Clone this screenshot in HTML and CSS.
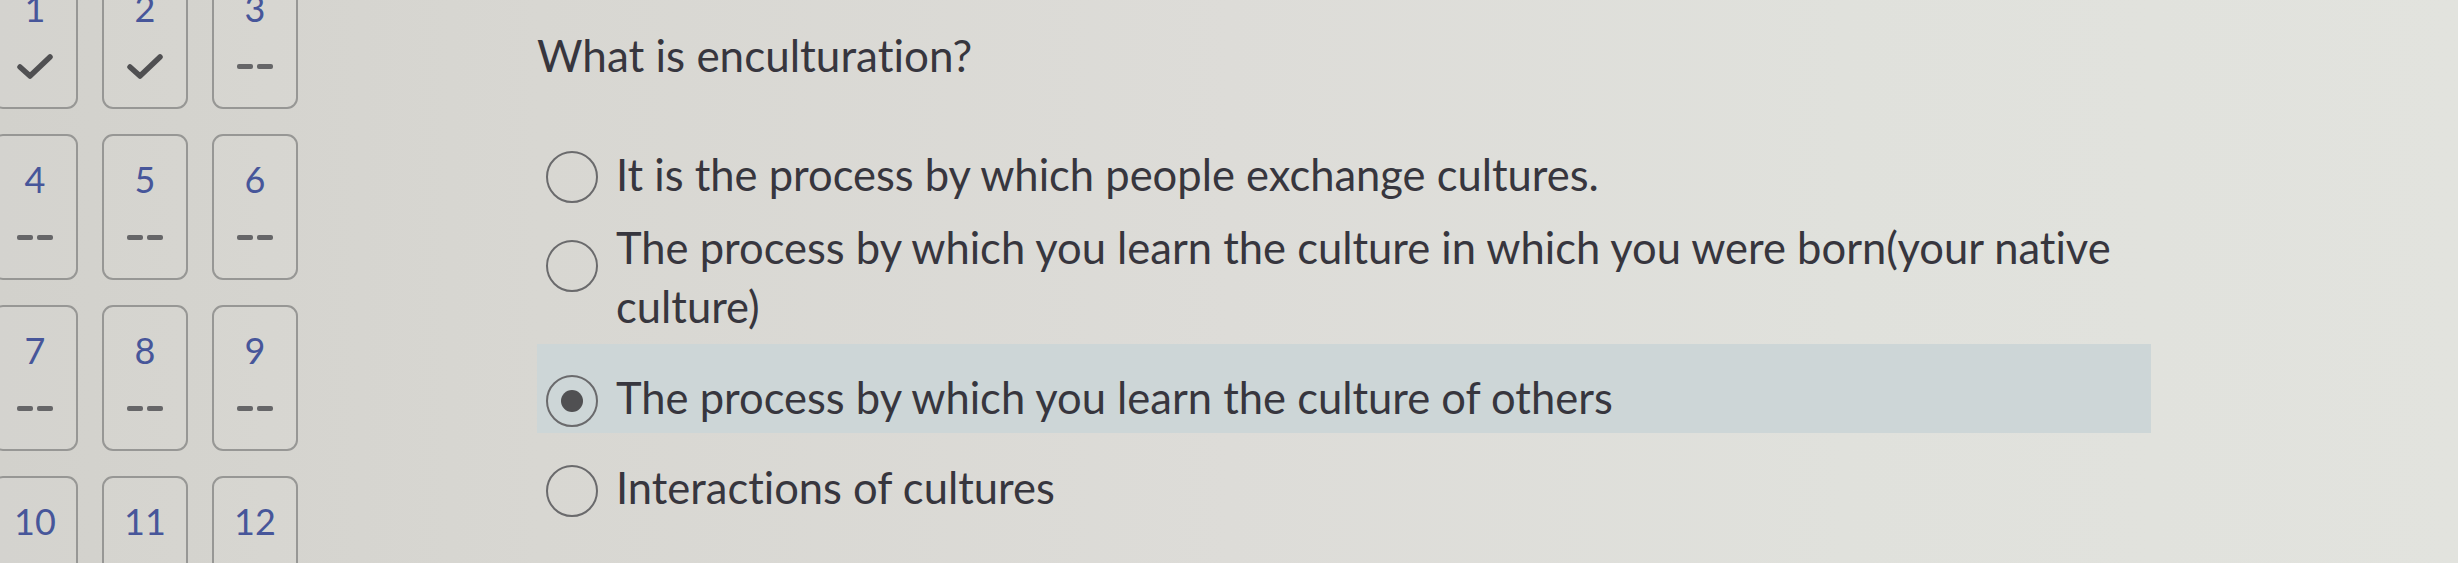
FILE: index.html
```html
<!DOCTYPE html>
<html lang="en">
<head>
<meta charset="utf-8">
<title>Quiz</title>
<link rel="stylesheet" href="styles.css">
</head>
<body>
<div class="page">
  <nav class="qnav">
    <div class="tile"><span class="num">1</span><svg class="check" viewBox="0 0 36 26"><path d="M3 14 L13 23 L33 4"/></svg></div>
    <div class="tile"><span class="num">2</span><svg class="check" viewBox="0 0 36 26"><path d="M3 14 L13 23 L33 4"/></svg></div>
    <div class="tile"><span class="num">3</span><span class="dash"><i></i><i></i></span></div>
    <div class="tile"><span class="num">4</span><span class="dash"><i></i><i></i></span></div>
    <div class="tile"><span class="num">5</span><span class="dash"><i></i><i></i></span></div>
    <div class="tile"><span class="num">6</span><span class="dash"><i></i><i></i></span></div>
    <div class="tile"><span class="num">7</span><span class="dash"><i></i><i></i></span></div>
    <div class="tile"><span class="num">8</span><span class="dash"><i></i><i></i></span></div>
    <div class="tile"><span class="num">9</span><span class="dash"><i></i><i></i></span></div>
    <div class="tile"><span class="num">10</span><span class="dash"><i></i><i></i></span></div>
    <div class="tile"><span class="num">11</span><span class="dash"><i></i><i></i></span></div>
    <div class="tile"><span class="num">12</span><span class="dash"><i></i><i></i></span></div>
  </nav>
  <main class="quiz">
    <h1 class="question">What is enculturation?</h1>
    <ul class="answers">
      <li class="answer a1"><span class="radio"></span><span class="label">It is the process by which people exchange cultures.</span></li>
      <li class="answer a2"><span class="radio"></span><span class="label">The process by which you learn the culture in which you were born(your native culture)</span></li>
      <li class="answer a3 selected"><span class="radio"></span><span class="label">The process by which you learn the culture of others</span></li>
      <li class="answer a4"><span class="radio"></span><span class="label">Interactions of cultures</span></li>
    </ul>
  </main>
</div>
</body>
</html>
```

FILE: styles.css
```css
html, body {
  margin: 0;
  padding: 0;
}
body {
  width: 2458px;
  height: 563px;
  overflow: hidden;
  background: linear-gradient(90deg, #d2d1cc 0%, #d8d7d2 22%, #dddcd8 50%, #e0e1dc 75%, #e2e3de 100%);
  font-family: Lato, "Open Sans", sans-serif;
  font-variant-ligatures: none;
  color: #37363e;
}
.page {
  display: flex;
  align-items: flex-start;
}
.qnav {
  display: grid;
  grid-template-columns: repeat(3, 86px);
  grid-auto-rows: 146px;
  column-gap: 24px;
  row-gap: 25px;
  margin-top: -37px;
  margin-left: -8px;
  flex: none;
}
.tile {
  box-sizing: border-box;
  border: 2px solid #979795;
  border-radius: 11px;
  background: rgba(255, 255, 255, 0.06);
  display: flex;
  flex-direction: column;
  align-items: center;
  padding-top: 23px;
}
.num {
  font-size: 36px;
  line-height: 40px;
  color: #47569a;
}
.check {
  width: 36px;
  height: 26px;
  margin-top: 25px;
}
.check path {
  fill: none;
  stroke: #505052;
  stroke-width: 5.5;
  stroke-linecap: round;
  stroke-linejoin: round;
}
.dash {
  display: flex;
  gap: 4px;
  margin-top: 36px;
}
.dash i {
  display: block;
  width: 16px;
  height: 5px;
  border-radius: 2px;
  background: #666668;
}
.quiz {
  margin-left: 239px;
  width: 1614px;
  flex: none;
}
.question {
  margin: 26px 0 0 0;
  font-size: 44px;
  font-weight: 400;
  line-height: 59px;
}
.answers {
  list-style: none;
  margin: 60px 0 0 0;
  padding: 0;
}
.answer {
  display: flex;
  align-items: flex-start;
  padding-left: 9px;
  font-size: 43.5px;
  line-height: 59px;
}
.label {
  flex: 1;
}
.radio {
  box-sizing: border-box;
  flex: none;
  width: 52px;
  height: 52px;
  border: 2.5px solid #6a6a6c;
  border-radius: 50%;
  margin-top: 7px;
  margin-right: 18px;
  display: flex;
  align-items: center;
  justify-content: center;
}
.a1 .radio {
  margin-top: 6px;
}
.a2 {
  margin-top: 14px;
}
.a2 .radio {
  margin-top: 22px;
}
.a3 {
  margin-top: 8px;
}
.a4 {
  margin-top: 25px;
}
.selected {
  background: #cdd6d7;
  padding-top: 24px;
  padding-bottom: 6px;
}
.selected .radio::after {
  content: "";
  width: 22px;
  height: 22px;
  border-radius: 50%;
  background: #505052;
}
```
